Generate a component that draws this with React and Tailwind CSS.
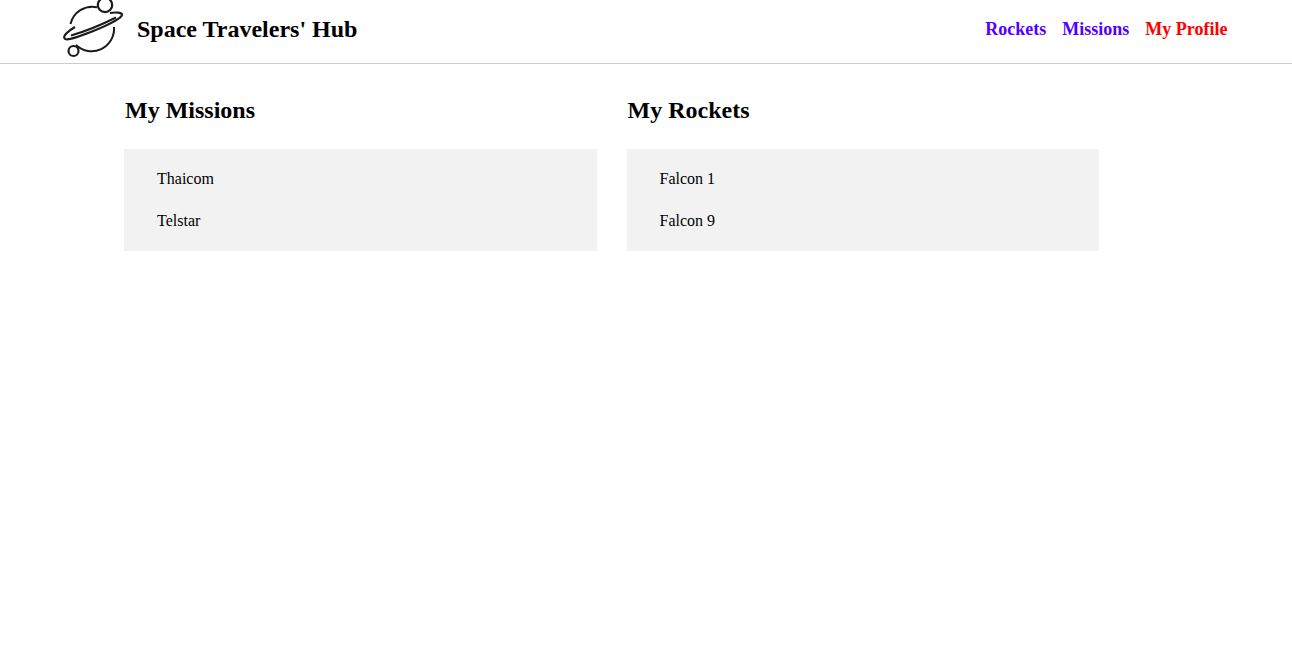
export default function App() {
  const serif = "font-['Liberation_Serif',serif]";
  return (
    <div className={`min-h-[664px] bg-white text-black ${serif}`}>
      <header className="flex h-[64px] items-start justify-between overflow-hidden border-b border-[#cccccc] pl-[62px] pr-[64.5px]">
        <div className="flex items-start">
          <svg width="62" height="60" viewBox="62 0 62 60" fill="none" stroke="#1c1c1c" className="mr-[13px]">
            <path d="M97 7.2 A22.5 22.5 0 0 0 70.5 24" strokeWidth="2" />
            <path d="M114 27 A22.5 22.5 0 0 1 76 45" strokeWidth="2" />
            <path d="M71 35.5 C85 31.5 101 25 116 17.5" strokeWidth="2" />
            <path d="M110 13 C116 12 122 12.5 122 14.8 C122 18 107 25.5 92 31.5 C78 37 68 40.8 65 38.8 C62 36.5 68 31 75 27" strokeWidth="2.2" />
            <circle cx="105" cy="5" r="7.2" strokeWidth="2.2" />
            <circle cx="73.5" cy="51" r="5" strokeWidth="2.2" />
          </svg>
          <h1 className="mt-[15px] text-[24px] font-bold leading-[28px]">Space Travelers' Hub</h1>
        </div>
        <nav className="mb-[5px] flex gap-4 self-center text-[18px] font-bold leading-[21px]">
          <a className="text-[#5200ff]">Rockets</a>
          <a className="text-[#5200ff]">Missions</a>
          <a className="text-[#ff0000]">My Profile</a>
        </nav>
      </header>
      <main className="ml-[124px] flex w-[975px] gap-[30px] pt-[33px]">
        <section className="flex-1">
          <h2 className="mb-[25px] pl-[1px] text-[24px] font-bold leading-[27px]">My Missions</h2>
          <ul className="bg-[#f2f2f2] px-[33px] py-[9px] text-[16px] leading-[18px]">
            <li className="py-[12px]">Thaicom</li>
            <li className="py-[12px]">Telstar</li>
          </ul>
        </section>
        <section className="flex-1">
          <h2 className="mb-[25px] pl-[1px] text-[24px] font-bold leading-[27px]">My Rockets</h2>
          <ul className="bg-[#f2f2f2] px-[33px] py-[9px] text-[16px] leading-[18px]">
            <li className="py-[12px]">Falcon 1</li>
            <li className="py-[12px]">Falcon 9</li>
          </ul>
        </section>
      </main>
    </div>
  );
}
